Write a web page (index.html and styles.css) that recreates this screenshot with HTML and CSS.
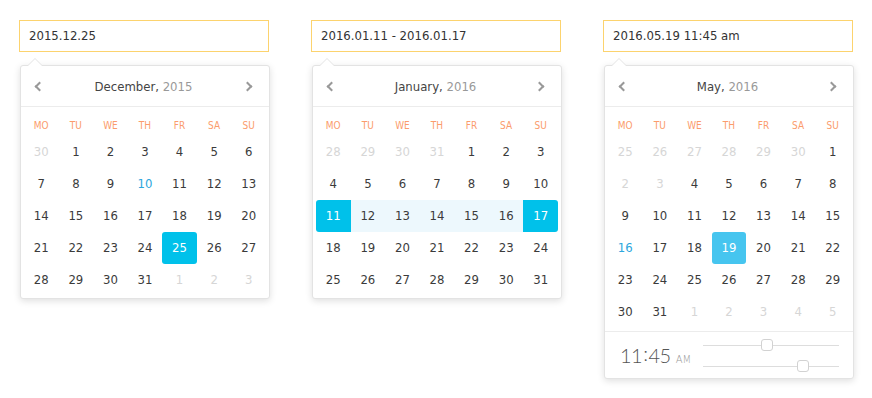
FILE: index.html
```html
<!DOCTYPE html>
<html lang="en">
<head>
    <meta charset="UTF-8">
    <title>Date Pickers</title>
    <link rel="stylesheet" href="styles.css">
</head>
<body>
    <div class="pickers">

        <!-- single date -->
        <div class="picker">
            <div class="field">2015.12.25</div>
            <div class="popup">
                <div class="head">
                    <span class="nav prev"></span>
                    <span class="title">December, <em>2015</em></span>
                    <span class="nav next"></span>
                </div>
                <div class="week">
                    <span>MO</span><span>TU</span><span>WE</span><span>TH</span><span>FR</span><span>SA</span><span>SU</span>
                </div>
                <div class="days">
                    <span class="off">30</span><span>1</span><span>2</span><span>3</span><span>4</span><span>5</span><span>6</span>
                    <span>7</span><span>8</span><span>9</span><span class="today">10</span><span>11</span><span>12</span><span>13</span>
                    <span>14</span><span>15</span><span>16</span><span>17</span><span>18</span><span>19</span><span>20</span>
                    <span>21</span><span>22</span><span>23</span><span>24</span><span class="sel">25</span><span>26</span><span>27</span>
                    <span>28</span><span>29</span><span>30</span><span>31</span><span class="off">1</span><span class="off">2</span><span class="off">3</span>
                </div>
            </div>
        </div>

        <!-- week range -->
        <div class="picker">
            <div class="field">2016.01.11 - 2016.01.17</div>
            <div class="popup">
                <div class="head">
                    <span class="nav prev"></span>
                    <span class="title">January, <em>2016</em></span>
                    <span class="nav next"></span>
                </div>
                <div class="week">
                    <span>MO</span><span>TU</span><span>WE</span><span>TH</span><span>FR</span><span>SA</span><span>SU</span>
                </div>
                <div class="days">
                    <span class="off">28</span><span class="off">29</span><span class="off">30</span><span class="off">31</span><span>1</span><span>2</span><span>3</span>
                    <span>4</span><span>5</span><span>6</span><span>7</span><span>8</span><span>9</span><span>10</span>
                    <span class="sel start">11</span><span class="range">12</span><span class="range">13</span><span class="range">14</span><span class="range">15</span><span class="range">16</span><span class="sel end">17</span>
                    <span>18</span><span>19</span><span>20</span><span>21</span><span>22</span><span>23</span><span>24</span>
                    <span>25</span><span>26</span><span>27</span><span>28</span><span>29</span><span>30</span><span>31</span>
                </div>
            </div>
        </div>

        <!-- date + time -->
        <div class="picker">
            <div class="field">2016.05.19 11:45 am</div>
            <div class="popup">
                <div class="head">
                    <span class="nav prev"></span>
                    <span class="title">May, <em>2016</em></span>
                    <span class="nav next"></span>
                </div>
                <div class="week">
                    <span>MO</span><span>TU</span><span>WE</span><span>TH</span><span>FR</span><span>SA</span><span>SU</span>
                </div>
                <div class="days">
                    <span class="off">25</span><span class="off">26</span><span class="off">27</span><span class="off">28</span><span class="off">29</span><span class="off">30</span><span>1</span>
                    <span class="off">2</span><span class="off">3</span><span>4</span><span>5</span><span>6</span><span>7</span><span>8</span>
                    <span>9</span><span>10</span><span>11</span><span>12</span><span>13</span><span>14</span><span>15</span>
                    <span class="today">16</span><span>17</span><span>18</span><span class="sel soft">19</span><span>20</span><span>21</span><span>22</span>
                    <span>23</span><span>24</span><span>25</span><span>26</span><span>27</span><span>28</span><span>29</span>
                    <span>30</span><span>31</span><span class="off">1</span><span class="off">2</span><span class="off">3</span><span class="off">4</span><span class="off">5</span>
                </div>
                <div class="time">
                    <div class="clock">11<b>:</b>45 <small>AM</small></div>
                    <div class="sliders">
                        <div class="slider"><i style="left: 43%"></i></div>
                        <div class="slider"><i style="left: 69%"></i></div>
                    </div>
                </div>
            </div>
        </div>

    </div>
</body>
</html>
```

FILE: styles.css
```css
* {
    margin: 0;
    padding: 0;
    box-sizing: border-box;
}

body {
    font-family: Tahoma, "DejaVu Sans Condensed", "DejaVu Sans", sans-serif;
    font-size: 13px;
    color: #3b3b3b;
    background: #fff;
}

.pickers {
    display: flex;
    gap: 42px;
    padding: 20px 19px;
    align-items: flex-start;
}

.picker {
    width: 250px;
}

.field {
    height: 32px;
    line-height: 30px;
    padding-left: 9px;
    border: 1px solid #fcd36e;
    color: #333;
}

.popup {
    position: relative;
    width: 250px;
    margin: 13px 0 0 1px;
    background: #fff;
    border: 1px solid #e3e3e3;
    border-radius: 3px;
    box-shadow: 0 2px 7px rgba(0, 0, 0, 0.13);
}

.popup::before,
.popup::after {
    content: '';
    position: absolute;
    left: 6px;
    border: 8px solid transparent;
    border-top: 0;
}

.popup::before {
    top: -8px;
    border-bottom-color: #e3e3e3;
}

.popup::after {
    top: -7px;
    border-bottom-color: #fff;
}

.head {
    display: flex;
    align-items: center;
    justify-content: space-between;
    height: 41px;
    padding: 0 18px 0 15px;
    border-bottom: 1px solid #ececec;
}

.title {
    color: #444;
}

.title em {
    font-style: normal;
    color: #999;
}

.nav {
    width: 7px;
    height: 7px;
    border-left: 2px solid #999;
    border-bottom: 2px solid #999;
}

.prev {
    transform: rotate(45deg);
}

.next {
    transform: rotate(-135deg);
}

.week,
.days {
    display: grid;
    grid-template-columns: repeat(7, 1fr);
    padding: 0 3px;
    text-align: center;
}

.week {
    padding-top: 9px;
    line-height: 20px;
    font-size: 10px;
    color: #fb9c6c;
}

.days {
    padding-bottom: 2px;
}

.days span {
    height: 32px;
    line-height: 32px;
    color: #3b3b3b;
}

.days .off {
    color: #d6d6d6;
}

.days .today {
    color: #2da6dd;
}

.days .range {
    background: #edf8fd;
}

.days .sel {
    background: #00c1ea;
    color: #fff;
    border-radius: 3px;
}

.days .sel.soft {
    background: #46c5ef;
}

.days .start {
    border-radius: 3px 0 0 3px;
}

.days .end {
    border-radius: 0 3px 3px 0;
}

.time {
    display: flex;
    align-items: center;
    height: 47px;
    margin-top: 1px;
    padding: 0 14px 0 15px;
    border-top: 1px solid #ececec;
}

.clock {
    width: 83px;
    font-family: Lato, "Open Sans", sans-serif;
    font-weight: 300;
    font-size: 20px;
    letter-spacing: -0.5px;
    color: #555;
}

.clock b {
    font-weight: 300;
    position: relative;
    top: -2px;
    padding: 0 1px;
}

.clock small {
    font-size: 10px;
    letter-spacing: 0;
    color: #999;
    font-family: Tahoma, "DejaVu Sans", sans-serif;
}

.sliders {
    flex: 1;
    display: flex;
    flex-direction: column;
    gap: 20px;
    padding-top: 2px;
}

.slider {
    position: relative;
    height: 1px;
    background: #ddd;
}

.slider i {
    position: absolute;
    top: -6px;
    width: 12px;
    height: 12px;
    background: #fff;
    border: 1px solid #d2d2d2;
    border-radius: 3px;
}
```
